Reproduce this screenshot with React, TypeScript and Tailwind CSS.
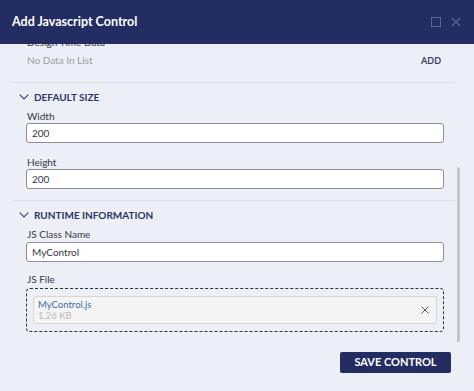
import React from "react";

const font = { fontFamily: 'Lato, "Open Sans", sans-serif' };

function Chevron() {
  return (
    <svg width="10" height="6" viewBox="0 0 10 6" fill="none" className="mr-[5px]">
      <path d="M0.7 0.7 L5 5 L9.3 0.7" stroke="#3a4270" strokeWidth="1.1" />
    </svg>
  );
}

function Label({ text, h = 14 }: { text: string; h?: number }) {
  return (
    <div className="flex items-center pl-[15px] text-[10px] text-[#333845]" style={{ height: h }}>
      {text}
    </div>
  );
}

function Input({ value }: { value: string }) {
  return (
    <div className="ml-[14px] flex h-[20px] w-[418px] items-center rounded-[3px] border border-[#8a8f99] bg-white pl-[5px] text-[10px] text-[#333845]">
      {value}
    </div>
  );
}

export default function App() {
  return (
    <div className="relative h-[391px] w-[474px] overflow-hidden bg-[#eceff5]" style={font}>
      <div className="relative z-10 flex h-[44px] items-center bg-[#232d62] pl-[12px] pr-[12px]">
        <div className="flex-1 pt-[1px] text-[12.5px] font-bold text-white">Add Javascript Control</div>
        <div className="mr-[10px] h-[10px] w-[10px] border border-[#5c6494]" />
        <svg width="10" height="10" viewBox="0 0 10 10" className="mr-[1px]">
          <path d="M1 1 L9 9 M9 1 L1 9" stroke="#5c6494" strokeWidth="1.3" />
        </svg>
      </div>
      <div className="relative h-[347px] overflow-hidden">
        <div className="ml-[12px] mt-[-9px] w-[443px]">
          <div className="flex h-[14px] items-center pl-[15px] text-[10px] text-[#333845]">Design Time Data</div>
          <div className="mt-[3px] flex h-[16px] items-center pl-[15px] pr-[14px] text-[10px] text-[#9a9ea8]">
            <div className="flex-1">No Data In List</div>
            <div className="mt-[2px] text-[9px] font-bold text-[#3a4060]">ADD</div>
          </div>
          <div className="mt-[14px] h-px bg-[#dde0e7]" />
          <div className="flex h-[26px] items-center pl-[7px] pt-[2px] text-[10px] font-bold text-[#2c3566]">
            <Chevron />
            DEFAULT SIZE
          </div>
          <Label text="Width" />
          <Input value="200" />
          <div className="h-[12px]" />
          <Label text="Height" />
          <Input value="200" />
          <div className="mt-[11px] h-px bg-[#dde0e7]" />
          <div className="flex h-[26px] items-center pl-[7px] pt-[2px] text-[10px] font-bold text-[#2c3566]">
            <Chevron />
            RUNTIME INFORMATION
          </div>
          <Label text="JS Class Name" h={15} />
          <Input value="MyControl" />
          <div className="h-[10px]" />
          <Label text="JS File" h={15} />
          <div className="ml-[14px] mt-[1px] w-[418px] rounded-[4px] border-[1.5px] border-dashed border-[#2c3142] px-[6px] py-[7px]">
            <div className="flex h-[28px] items-center rounded-[3px] border border-[#d6d6d6] bg-[#f4f4f4] pl-[4px] pr-[7px]">
              <div className="flex flex-1 flex-col leading-[11px]">
                <span className="text-[9.5px] text-[#3a6ea5]">MyControl.js</span>
                <span className="text-[9.5px] text-[#b8b8b8]">1.26 KB</span>
              </div>
              <svg width="8" height="8" viewBox="0 0 8 8">
                <path d="M0.5 0.5 L7.5 7.5 M7.5 0.5 L0.5 7.5" stroke="#555" strokeWidth="1" />
              </svg>
            </div>
          </div>
          <div className="mt-[20px] flex justify-end">
            <div className="mr-[4px] flex h-[21px] w-[111px] items-center justify-center rounded-[2px] bg-[#232d62] text-[11px] font-bold text-white">
              SAVE CONTROL
            </div>
          </div>
        </div>
        <div className="absolute left-[457px] top-[123px] h-[175px] w-[3px] rounded-full bg-[#c4c6cb]" />
      </div>
    </div>
  );
}
